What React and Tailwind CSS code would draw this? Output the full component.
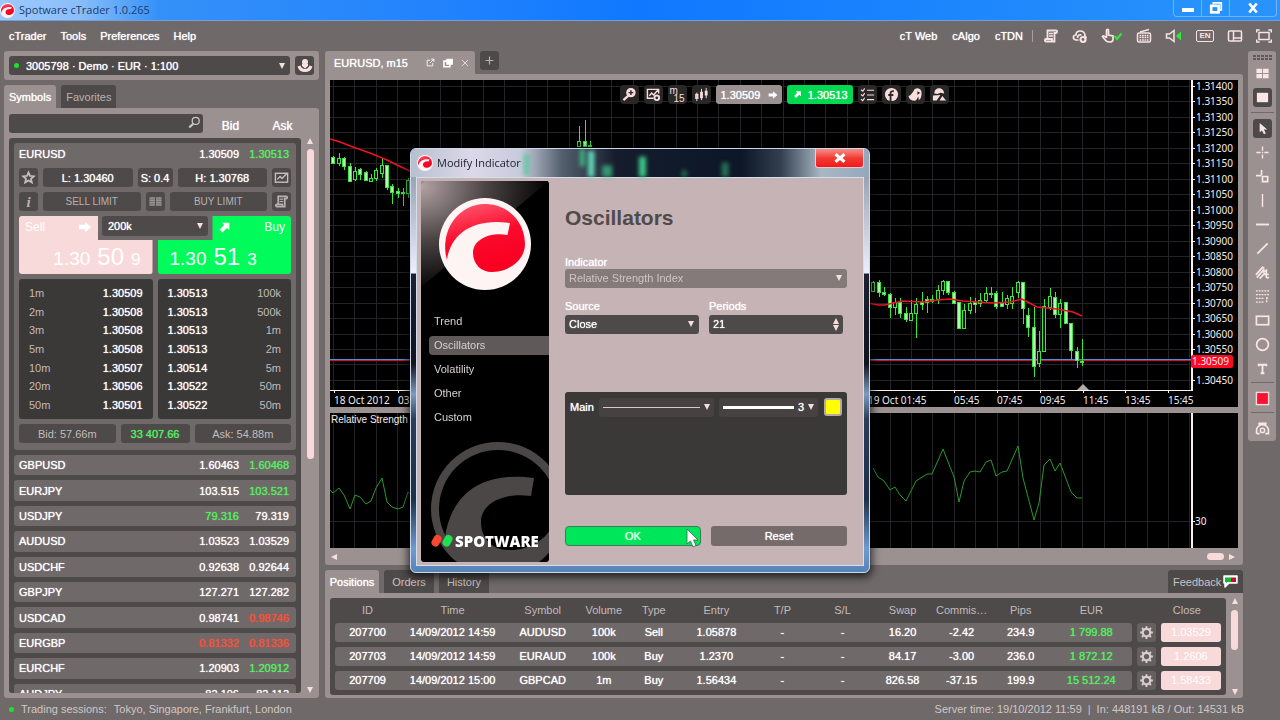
import React from "react";

const glow = "[text-shadow:0_0_1px_currentColor]";

/* ---------- small shared pieces ---------- */

function Icon({ children, size = 16, className = "" }) {
  return (
    <svg
      width={size}
      height={size}
      viewBox="0 0 16 16"
      fill="none"
      stroke="currentColor"
      strokeWidth="1.5"
      className={"shrink-0 " + className}
      aria-hidden="true"
    >
      {children}
    </svg>
  );
}

function Triangle({ dir = "down", className = "" }) {
  const points = {
    down: "0,0 8,0 4,8",
    up: "0,8 8,8 4,0",
    left: "8,0 8,8 0,4",
    right: "0,0 0,8 8,4",
  }[dir];
  return (
    <svg width="6" height="6" viewBox="0 0 8 8" className={"shrink-0 fill-[#f9dede] " + className} aria-hidden="true">
      <polygon points={points} />
    </svg>
  );
}

function Select({ label, options, className = "", wrap = "", ...rest }) {
  return (
    <div className={"relative " + wrap}>
      <select aria-label={label} className={"w-full appearance-none rounded-[3px] outline-none " + className} {...rest}>
        {options.map((o) => (
          <option key={o}>{o}</option>
        ))}
      </select>
      <Triangle className="pointer-events-none absolute top-1/2 right-[5px] -translate-y-1/2" />
    </div>
  );
}

const LOGO_PATH =
  "M-38 16 C-46 -14 -26 -40 0 -40 C23 -40 40 -22 40 0 C40 16 24 28 7 28 C-4 28 -12 20 -12 9 C-12 -4 4 -12 22.500 -9 L25 -21 C-10 -26 -34 -12 -38 16Z";

function Logo({ size }) {
  return (
    <svg width={size} height={size} viewBox="-46 -46 92 92" className="shrink-0" aria-hidden="true">
      <defs>
        <linearGradient id="logoRed" x1="0" y1="0" x2="0.3" y2="1">
          <stop offset="0" stopColor="#ff6076" />
          <stop offset="0.55" stopColor="#fb0a2c" />
          <stop offset="1" stopColor="#f90022" />
        </linearGradient>
      </defs>
      <circle r="46" fill="#fff4f4" />
      <path d={LOGO_PATH} fill="url(#logoRed)" />
    </svg>
  );
}

/* ---------- icons ---------- */

const Scroll = ({ size = 16 }) => (
  <Icon size={size}>
    <path d="M4.500 11V2.500H13c1.500 0 1.500 2.500 0 2.500h-1.500v8.500H3c-1.500 0-1.500-2.500 0-2.500h6v2.500" strokeWidth="1.800" />
    <path d="M6 5.500h4M6 8h4" strokeWidth="1.300" />
  </Icon>
);
const CloudGear = () => (
  <Icon>
    <path d="M6.500 12H4c-4-1-3-5 0-5 0-3 2-4 4-4 3 0 5 2 5 5l1.500 2M5.500 10c0-3 2-3.500 4-3" strokeWidth="1.700" />
    <circle cx="11" cy="11.500" r="2.500" strokeWidth="2.200" />
  </Icon>
);
const HandCheck = () => (
  <svg width="22" height="16" viewBox="0 0 22 16" fill="none" stroke="currentColor" strokeWidth="1.700" aria-hidden="true">
    <path d="M5.500 10V2.500c0-1.500 2-1.500 2 0V7l4.500 1v3.500c0 2-2 2.500-3.500 2.500-3 0-4-1.500-7-5.500 1-1.500 2.500 0 4 1.500" />
    <path d="M13.500 8l2.500 3 4.500-5.500" stroke="#35e83a" strokeWidth="2" />
  </svg>
);
const KeyboardIcon = () => (
  <Icon>
    <rect x="1.500" y="5" width="13" height="9" rx="1.500" />
    <path d="M4 4l9-2.500" />
    <path d="M3.500 7.500h9M3.500 9.500h9M3.500 12h9" strokeDasharray="1.800 0.700" />
  </Icon>
);
const Speaker = () => (
  <svg width="18" height="16" viewBox="0 0 18 16" fill="none" stroke="currentColor" strokeWidth="1.500" aria-hidden="true">
    <path d="M1.500 6h3L9 2.500v11L4.500 10h-3z" />
    <path d="M11 8l5-4.500v9z" fill="#35e83a" stroke="none" />
  </svg>
);
const Lang = () => (
  <span className="flex h-[12px] w-[18px] items-center justify-center rounded-[2px] border border-[#f9e2e2] text-[8px] font-bold">
    EN
  </span>
);
const Layout = () => (
  <Icon>
    <rect x="1.500" y="3" width="13" height="10" rx="1" />
    <path d="M6.500 3v10M6.500 10h8" />
  </Icon>
);
const Fullscreen = () => (
  <Icon>
    <rect x="3" y="4.500" width="10" height="7" />
    <path d="M0.700 4.500V2h3M15.300 4.500V2h-3M0.700 11.500V14h3M15.300 11.500V14h-3" />
  </Icon>
);
const Search = ({ size = 14, plus }) => (
  <Icon size={size}>
    <circle cx="9.500" cy="6" r="4.300" fill={plus ? "currentColor" : "none"} />
    <path d="M6.500 9.500L1.500 14" strokeWidth="2.500" />
    {plus && <path d="M9.500 3.500v5M7 6h5" stroke="#2a2727" />}
  </Icon>
);
const Star = () => (
  <Icon size={15}>
    <path d="M8 2.500l1.600 3.800 4.100.4-3.100 2.700 1 4L8 11.200l-3.600 2.200 1-4-3.100-2.700 4.100-.4z" strokeWidth="1.800" />
  </Icon>
);
const ChartBox = () => (
  <Icon size={15}>
    <rect x="1.500" y="3.500" width="13" height="9.500" />
    <path d="M3.500 10l3-3 2 2L14 3.500" />
  </Icon>
);
const Gear = () => (
  <Icon size={15}>
    <circle cx="8" cy="8" r="4" strokeWidth="2.400" />
    <path
      d="M8 1.200v3M8 11.800v3M1.200 8h3M11.800 8h3M3.200 3.200l2 2M10.800 10.800l2 2M3.200 12.800l2-2M10.800 5.200l2-2"
      strokeWidth="2"
    />
  </Icon>
);
const ArrowRight = ({ size = 14 }) => (
  <Icon size={size}>
    <path d="M1 5.500h7V2l7 6-7 6v-3.500H1z" fill="currentColor" stroke="none" />
  </Icon>
);
const ArrowUpRight = ({ size = 14 }) => (
  <Icon size={size}>
    <path d="M5 2h9v9l-3-2.500L5.500 14 2 10.500 7.500 5z" fill="currentColor" stroke="none" />
  </Icon>
);

/* ---------- window title and main menu ---------- */

function TitleBar() {
  return (
    <header className="flex h-[21px] shrink-0 justify-between border-b border-[#6f9fe0] bg-gradient-to-r from-[#3f98f6] via-[#0f78ff] to-[#2a94fb]">
      <div className="flex items-center gap-1 bg-gradient-to-r from-[#9cc9fa] via-[#8abefa] to-transparent pr-2 font-['Open_Sans','Noto_Sans',sans-serif] text-[11px] text-[#1c3c6e]">
        <Logo size={15} />
        <span>Spotware cTrader 1.0.265</span>
      </div>
      <div className="mr-[3px] flex h-[17px] rounded-b border-x border-b border-[#6db5ff] text-white">
        <button aria-label="Minimize" className="flex w-7 items-center justify-center border-r border-[#6db5ff]">
          <span className="mt-1 h-[4px] w-3 bg-white" />
        </button>
        <button aria-label="Restore" className="flex w-7 items-center justify-center border-r border-[#6db5ff]">
          <Icon size={14}>
            <path d="M5 4V2h9v8h-2" strokeWidth="2" />
            <rect x="2.500" y="5.500" width="8.500" height="7.500" strokeWidth="3" />
          </Icon>
        </button>
        <button aria-label="Close" className="flex w-[46px] items-center justify-center">
          <Icon size={12}>
            <path d="M3 2l10 12M13 2L3 14" strokeWidth="3.500" />
          </Icon>
        </button>
      </div>
    </header>
  );
}

function MenuBar() {
  const tools = [
    ["Journal", <Scroll />],
    ["Cloud settings", <CloudGear />],
    ["One click trading", <HandCheck />],
    ["Hotkeys", <KeyboardIcon />],
    ["Sound", <Speaker />],
    ["Language", <Lang />],
    ["Layout", <Layout />],
    ["Full screen", <Fullscreen />],
  ];
  return (
    <nav className={"flex h-[30px] shrink-0 items-center justify-between pr-2 pl-[9px] text-white " + glow}>
      <div className={"flex gap-[14px] " + glow}>
        {["cTrader", "Tools", "Preferences", "Help"].map((t) => (
          <button key={t} className={glow}>{t}</button>
        ))}
      </div>
      <div className="flex items-center">
        <div className="flex gap-[15px]">
          {["cT Web", "cAlgo", "cTDN"].map((t) => (
            <a key={t} href="#">{t}</a>
          ))}
        </div>
        <span className="mr-[10px] ml-[9px] h-3 w-px bg-[#a89e9e]" />
        <div className="flex items-center gap-[13px] text-[#f9e2e2]">
          {tools.map(([name, icon]) => (
            <button key={name} aria-label={name}>{icon}</button>
          ))}
        </div>
      </div>
    </nav>
  );
}

/* ---------- symbols column ---------- */

const chip = "flex h-[19px] items-center justify-center rounded-[3px] bg-[#4f4a4a]";
const SELL_DEPTH = [["1m", "1.30509"], ["2m", "1.30508"], ["3m", "1.30508"], ["5m", "1.30508"], ["10m", "1.30507"], ["20m", "1.30506"], ["50m", "1.30501"]];
const BUY_DEPTH = [["100k", "1.30513"], ["500k", "1.30513"], ["1m", "1.30513"], ["2m", "1.30513"], ["5m", "1.30514"], ["50m", "1.30522"], ["50m", "1.30522"]];

const UP = "text-[#55f060]";
const DOWN = "text-[#ff5138]";
const FLAT = "text-white";
const SYMBOLS = [
  ["GBPUSD", "1.60463", FLAT, "1.60468", UP],
  ["EURJPY", "103.515", FLAT, "103.521", UP],
  ["USDJPY", "79.316", UP, "79.319", FLAT],
  ["AUDUSD", "1.03523", FLAT, "1.03529", FLAT],
  ["USDCHF", "0.92638", FLAT, "0.92644", FLAT],
  ["GBPJPY", "127.271", FLAT, "127.282", FLAT],
  ["USDCAD", "0.98741", FLAT, "0.98746", DOWN],
  ["EURGBP", "0.81332", DOWN, "0.81336", DOWN],
  ["EURCHF", "1.20903", FLAT, "1.20912", UP],
  ["AUDJPY", "82.106", FLAT, "82.112", FLAT],
];

function Depth({ rows, reverse }) {
  return (
    <div className="grid h-[140px] auto-rows-fr rounded-[3px] bg-[#3b3838] px-[10px] py-[5px]">
      {rows.map(([vol, price], i) => (
        <div key={i} className={"flex items-center justify-between " + (reverse ? "flex-row-reverse" : "")}>
          <span className="text-[#c2baba]">{vol}</span>
          <span className={"text-white " + glow}>{price}</span>
        </div>
      ))}
    </div>
  );
}

function SymbolCard() {
  return (
    <article className="shrink-0 rounded-[3px] bg-[#706969] px-[5px] pb-[7px] text-white">
      <div className={"flex h-[25px] items-center pr-[2px] pb-[3px] " + glow}>
        <h2 className="flex-1">EURUSD</h2>
        <span className="w-[50px] text-right">1.30509</span>
        <span className={"w-[50px] text-right " + UP}>1.30513</span>
      </div>
      <div className="flex flex-col gap-[5px]">
        <div className="flex gap-[5px]">
          <button aria-label="Favorite" className={chip + " w-[19px] text-[#c9bebe]"}><Star /></button>
          <span className={chip + " flex-1 " + glow}>L: 1.30460</span>
          <span className={chip + " w-[35px] " + glow}>S: 0.4</span>
          <span className={chip + " flex-1 " + glow}>H: 1.30768</span>
          <button aria-label="Open chart" className={chip + " w-[19px] text-[#c9bebe]"}><ChartBox /></button>
        </div>
        <div className="flex gap-[5px] text-[10px] text-[#b9b0b0]">
          <button aria-label="Symbol info" className={chip + " w-[19px] font-['Liberation_Serif',serif] text-[15px] font-bold italic"}>i</button>
          <button className={chip + " flex-1"}>SELL LIMIT</button>
          <button aria-label="Depth of market" className={chip + " w-[19px]"}>
            <Icon size={15}>
              <path d="M1.500 3.500h6v9h-6zM8.500 3.500h6v9h-6z" fill="currentColor" stroke="none" opacity="0.7" />
              <path d="M1 5.500h14M1 8h14M1 10.500h14" stroke="#4f4a4a" strokeWidth="0.500" />
            </Icon>
          </button>
          <button className={chip + " flex-1"}>BUY LIMIT</button>
          <button aria-label="Order history" className={chip + " w-[19px]"}><Scroll size={15} /></button>
        </div>
        <div className="relative grid h-[58px] grid-cols-2 gap-[5px]">
          <button className="flex flex-col justify-between rounded-[3px] bg-[#f9dada] [clip-path:polygon(0_0,79px_0,79px_24px,100%_24px,100%_100%,0_100%)]">
            <span className="flex w-[79px] items-center justify-between px-[6px] pt-1 text-[12px]">
              Sell <ArrowRight />
            </span>
            <span className="flex w-full items-baseline justify-end gap-[7px] pr-3 text-[19px] leading-7">
              1.30 <b className="text-[24px] font-normal">50</b> <small className="text-[17px]">9</small>
            </span>
          </button>
          <button className="flex flex-col justify-between rounded-[3px] bg-[#00fb5b] [clip-path:polygon(55px_0,100%_0,100%_100%,0_100%,0_24px,55px_24px)]">
            <span className="flex w-[79px] items-center justify-between self-end px-[6px] pt-1 text-[12px]">
              <ArrowUpRight size={13} /> Buy
            </span>
            <span className="flex w-full items-baseline gap-[7px] pl-3 text-[19px] leading-7">
              1.30 <b className="text-[24px] font-normal">51</b> <small className="text-[17px]">3</small>
            </span>
          </button>
          <Select
            label="Volume"
            options={["200k", "100k", "500k"]}
            wrap="!absolute inset-x-[83px] top-0"
            className={"h-5 bg-[#4f4a4a] px-[6px] " + glow}
          />
        </div>
        <div className="grid grid-cols-2 gap-[5px]">
          <Depth rows={SELL_DEPTH} />
          <Depth rows={BUY_DEPTH} reverse />
        </div>
        <div className="flex gap-[5px] text-[#c2baba]">
          <span className={chip + " flex-1"}>Bid: 57.66m</span>
          <span className={chip + " w-[69px] " + UP + " " + glow}>33 407.66</span>
          <span className={chip + " flex-1"}>Ask: 54.88m</span>
        </div>
      </div>
    </article>
  );
}

function SymbolsColumn() {
  return (
    <aside className="flex w-[315px] shrink-0 flex-col">
      <div className="mb-[5px] flex gap-[5px] rounded-[3px] bg-[#9b9191] p-[5px]">
        <div className="relative flex-1">
          <Select
            label="Account"
            options={["3005798 · Demo · EUR · 1:100"]}
            className={"h-[19px] bg-[#4f4a4a] pr-4 pl-[17px] text-white " + glow}
          />
          <span className="pointer-events-none absolute top-[7px] left-[5px] h-[5px] w-[5px] rounded-full bg-[#1fe030]" />
        </div>
        <button aria-label="Deposit" className={chip + " w-[19px] text-[#f9e2e2]"}>
          <Icon>
            <circle cx="8" cy="4" r="3" fill="currentColor" stroke="none" />
            <path d="M5 6h6v2l-3 2.500L5 8z" fill="currentColor" stroke="none" />
            <path d="M2 8c1 3.500 3.500 4.500 6 4.500s5-1 6-4.500" strokeWidth="3" />
          </Icon>
        </button>
      </div>
      <div role="tablist" className="flex h-[23px] gap-[5px]">
        <button role="tab" aria-selected="true" className={"rounded-t-[3px] bg-[#9b9191] px-[5px] text-white " + glow}>Symbols</button>
        <button role="tab" aria-selected="false" className="rounded-t-[3px] bg-[#4f4a4a] px-[5px] text-[#b9b0b0]">Favorites</button>
      </div>
      <div className="flex min-h-0 flex-1 flex-col rounded-[3px] rounded-tl-none bg-[#9b9191] pt-[6px] pb-[5px] pl-[5px]">
        <div className="mb-[5px] flex items-center text-[12px] text-white">
          <div className="relative w-[194px] text-[#d2c8c8]">
            <input aria-label="Search symbols" className="block h-[19px] w-full rounded-[3px] bg-[#4f4a4a] px-2 text-[11px] text-white outline-none" />
            <span className="pointer-events-none absolute top-[2px] right-[2px]"><Search size={13} /></span>
          </div>
          <span className={"w-[55px] pt-1 text-center " + glow}>Bid</span>
          <span className={"w-[49px] pt-1 text-center " + glow}>Ask</span>
        </div>
        <div className="flex min-h-0 flex-1">
          <div className="flex min-w-0 flex-1 flex-col gap-[5px] overflow-hidden rounded-[3px] bg-[#4f4a4a] px-[5px] pt-[5px]">
            <SymbolCard />
            <ul className="grid h-[249px] shrink-0 auto-rows-fr gap-[5px]">
              {SYMBOLS.map(([name, bid, bc, ask, ac]) => (
                <li key={name} className={"flex items-center rounded-[3px] bg-[#706969] pr-[7px] pl-[5px] text-white " + glow}>
                  <span className="flex-1">{name}</span>
                  <span className={"w-[50px] text-right " + bc}>{bid}</span>
                  <span className={"w-[50px] text-right " + ac}>{ask}</span>
                </li>
              ))}
            </ul>
          </div>
          <div className="flex w-[18px] flex-col items-center">
            <Triangle dir="up" />
            <span className="mt-[5px] h-[310px] w-[7px] rounded-full bg-[#f9dada]" />
            <Triangle className="mt-auto" />
          </div>
        </div>
      </div>
    </aside>
  );
}

/* ---------- chart ---------- */

/* x, body top, body bottom, wick top, wick bottom, 1 = filled body */
const CANDLES = [
  [333, 157, 163, 156, 164, 1], [339, 158, 163, 153, 166, 0], [344, 158, 166, 157, 170, 1], [350, 166, 181, 163, 182, 1],
  [355, 171, 179, 167, 181, 0], [360, 169, 174, 168, 180, 1], [366, 172, 180, 171, 181, 1], [371, 178, 181, 174, 182, 0],
  [376, 170, 178, 168, 181, 0], [382, 165, 173, 158, 178, 0], [387, 165, 187, 165, 190, 1], [392, 186, 192, 184, 204, 1],
  [398, 191, 193, 188, 198, 1], [403, 192, 193, 188, 206, 1], [408, 180, 193, 178, 198, 0],
  [579, 141, 146, 126, 147, 0], [585, 141, 146, 120, 147, 1], [590, 145, 146, 141, 147, 0],
  [873, 282, 291, 281, 292, 0], [879, 282, 292, 280, 297, 1], [884, 292, 294, 287, 296, 1], [890, 294, 307, 293, 318, 1],
  [895, 302, 307, 298, 315, 0], [900, 302, 313, 298, 318, 1], [906, 313, 319, 307, 322, 1], [911, 313, 320, 300, 321, 0],
  [916, 304, 313, 298, 338, 0], [922, 302, 304, 292, 310, 1], [927, 299, 302, 296, 313, 1], [932, 299, 301, 295, 303, 1],
  [938, 290, 299, 285, 304, 0], [943, 281, 290, 280, 295, 0], [948, 281, 292, 281, 295, 1], [954, 292, 303, 291, 303, 1],
  [959, 302, 328, 302, 328, 1], [964, 310, 328, 304, 328, 0], [970, 303, 310, 297, 314, 0], [975, 302, 304, 298, 313, 1],
  [980, 300, 303, 293, 307, 0], [986, 293, 300, 287, 303, 0], [991, 293, 294, 287, 298, 1], [996, 293, 306, 291, 309, 1],
  [1002, 303, 306, 292, 307, 1], [1007, 298, 304, 295, 309, 0], [1012, 296, 303, 287, 309, 0], [1018, 282, 292, 281, 298, 0],
  [1023, 282, 308, 282, 324, 1], [1028, 315, 327, 308, 337, 1], [1034, 327, 366, 307, 377, 1], [1039, 351, 363, 331, 367, 0],
  [1044, 306, 351, 299, 352, 0], [1050, 296, 307, 288, 310, 0], [1055, 297, 314, 292, 318, 1], [1060, 303, 314, 299, 328, 0],
  [1066, 302, 323, 302, 324, 1], [1071, 323, 350, 323, 359, 1], [1077, 351, 360, 347, 368, 1], [1082, 361, 362, 339, 366, 1],
];

const PRICES = Array.from({ length: 20 }, (_, i) => (1.314 - i * 0.0005).toFixed(5));
const COLS = Array.from({ length: 41 }, (_, i) => Math.round(333 + i * 21.41));
const rowY = (i) => Math.round(86 + i * 15.47);
const TIMES = [["18 Oct 2012", 334], ["03:45", 398], ["19 Oct 01:45", 868], ["05:45", 954], ["07:45", 997], ["09:45", 1040], ["11:45", 1083], ["13:45", 1125], ["15:45", 1168]];
const axisFont = "fill-[#f4ecec] font-['Noto_Sans',sans-serif] text-[10px]";

function PriceChart() {
  return (
    <svg className="block h-full w-full" viewBox="330 80 908 327" preserveAspectRatio="xMinYMin slice" role="img" aria-label="EURUSD m15 price chart">
      <g stroke="#242428" shapeRendering="crispEdges">
        {COLS.map((x) => <line key={x} x1={x} x2={x} y1="80" y2="390" />)}
        {PRICES.map((p, i) => <line key={p} x1="330" x2="1191" y1={rowY(i)} y2={rowY(i)} />)}
      </g>
      <rect x="330" y="359" width="862" height="1" fill="#4a90e0" />
      <rect x="330" y="360" width="862" height="1" fill="#e00a30" />
      <g shapeRendering="crispEdges">
        {CANDLES.map(([x, top, bot, hi, lo, full]) => (
          <g key={x}>
            <rect x={x - 0.5} y={hi} width="1" height={lo - hi} fill="#35e83a" />
            <rect x={x - 1.5} y={top} width="3" height={Math.max(bot - top, 1)} fill={full ? "#b4f7ae" : "#031503"} stroke="#35e83a" />
          </g>
        ))}
      </g>
      <g fill="none" stroke="#ee1420" strokeWidth="1.600">
        <polyline points="330,139 340,142 353,147 370,153 387,160 397,165 412,172" />
        <path d="M868 303 L878 305 L885 305 L893 303 L903 301 L923 302 L938 300 L950 299 L963 301 L993 303 L1010 302 L1022 299 L1037 307 L1057 309 L1073 312 L1082 316" />
      </g>
      <path d="M1077 390l6-6 6 6z" fill="#b5aaaa" />
      <g fill="#fbf0f0">
        <rect x="330" y="390" width="862" height="1" />
        <rect x="1191" y="80" width="2" height="311" />
        {TIMES.map(([t, x]) => <rect key={t} x={x} y="390" width="1" height="3" />)}
        {PRICES.map((p, i) => <rect key={p} x="1192" y={rowY(i)} width="3" height="1" />)}
      </g>
      <g className={axisFont}>
        {PRICES.map((p, i) => i !== 18 && <text key={p} x="1196" y={rowY(i) + 4}>{p}</text>)}
        {TIMES.map(([t, x]) => <text key={t} x={x} y="404">{t}</text>)}
      </g>
      <rect x="1191" y="355" width="42" height="13" rx="2" fill="#fb0a22" />
      <text x="1192" y="365" className={axisFont}>1.30509</text>
    </svg>
  );
}

function OscillatorChart() {
  return (
    <svg className="block h-full w-full" viewBox="330 413 908 135" preserveAspectRatio="xMinYMin slice" role="img" aria-label="Relative Strength Index">
      <g stroke="#242428" shapeRendering="crispEdges">
        {COLS.map((x) => <line key={x} x1={x} x2={x} y1="413" y2="548" />)}
        <line x1="330" x2="1191" y1="521" y2="521" />
      </g>
      <g fill="none" stroke="#279a2b">
        <polyline points="330,490 333,493 339,488 344,495 350,509 355,495 360,497 366,504 371,501 376,488 382,478 387,502 392,507 398,509 403,507 408,492 413,496" />
        <polyline points="873,468 878,477 884,481 890,490 895,487 900,495 906,501 916,481 927,474 932,474 943,449 954,477 959,502 964,481 970,472 975,471 980,472 986,462 991,460 996,476 1002,472 1007,471 1018,446 1023,478 1034,520 1039,503 1044,465 1050,459 1055,471 1060,463 1071,492 1077,498 1082,498" />
      </g>
      <rect x="1191" y="413" width="2" height="135" fill="#fbf0f0" />
      <rect x="1192" y="521" width="3" height="1" fill="#fbf0f0" />
      <text x="331" y="423" className="fill-[#f4ecec] font-['Liberation_Sans',sans-serif] text-[10px]">Relative Strength</text>
      <text x="1195" y="525" className={axisFont}>30</text>
    </svg>
  );
}

const overlayBtn = "flex h-[19px] w-[19px] items-center justify-center rounded-[4px] bg-[#2d2a2a]/90 text-[#f9dede]";

function ChartToolbar() {
  return (
    <div className="absolute inset-x-0 top-[5px] flex justify-center gap-[5px] text-white">
      <button aria-label="Zoom" className={overlayBtn}><Search plus size={15} /></button>
      <button aria-label="Chart settings" className={overlayBtn}>
        <Icon size={15}>
          <path d="M8 12H1.500V2.500h12V7M3.500 9.500l2.500-3 2 2 4.500-5" />
          <circle cx="11.500" cy="11.500" r="2.500" strokeWidth="2" />
        </Icon>
      </button>
      <button aria-label="Timeframe" className={overlayBtn + " flex-col text-[10px] leading-[8px]"}>
        <span className="self-start pl-[2px]">m</span>
        <span className="self-end pr-[2px]">15</span>
      </button>
      <button aria-label="Chart type" className={overlayBtn}>
        <Icon size={15}>
          <path d="M3 6v9M8 2v12M13 1v11" strokeWidth="1" />
          <rect x="2" y="8" width="2" height="4" />
          <path d="M6.500 5h3v7h-3zM11.500 4h3v5h-3z" fill="currentColor" stroke="none" />
        </Icon>
      </button>
      <button className={"flex h-[19px] w-[66px] items-center justify-between rounded-[3px] bg-[#9b9191] pr-1 pl-[5px] " + glow}>
        1.30509 <ArrowRight size={10} />
      </button>
      <button className={"flex h-[19px] w-[66px] items-center justify-between rounded-[3px] bg-[#00d84f] pr-[5px] pl-[6px] " + glow}>
        <ArrowUpRight size={9} /> 1.30513
      </button>
      <button aria-label="Objects" className={overlayBtn}>
        <Icon size={15}>
          <path d="M1 3l2 1.500L5 1.500M1 8l2 1.500L5 6.500M1 13l2 1.500L5 11.500M7.500 3.500H15M7.500 8.500H15M7.500 13.500H15" strokeWidth="1.200" />
        </Icon>
      </button>
      <button aria-label="Share on Facebook" className={overlayBtn}>
        <Icon size={15}>
          <circle cx="8" cy="8" r="7" fill="currentColor" stroke="none" />
          <path d="M7 15V6.500Q7 4 10.500 4.500M4.500 8.500h5.500" stroke="#2d2a2a" strokeWidth="2" />
        </Icon>
      </button>
      <button aria-label="Share on Twitter" className={overlayBtn}>
        <Icon size={15}>
          <path d="M0.500 9.500C3 9 3.500 7 5.500 5 6.500 1.500 10 0.500 12.500 2c2.500 1.500 2.500 6 1 10l-2 2-.5-4-2.500 4.500C4 15 1 13 .5 9.500z" fill="currentColor" stroke="none" />
          <path d="M10 4.500l3 1.500-3 2.500z" fill="#2d2a2a" stroke="none" />
        </Icon>
      </button>
      <button aria-label="Send by mail" className={overlayBtn}>
        <Icon size={15}>
          <path d="M2.500 7C2.500-.5 12.500-.5 13 7L9 6 6 7.500zM1 14.500V9l8-.5-4 6zM8 14.500l3-5 4 5z" fill="currentColor" stroke="none" />
        </Icon>
      </button>
    </div>
  );
}

function ChartPanel() {
  return (
    <section className="flex min-h-0 flex-1 flex-col">
      <div className="flex h-[23px] shrink-0 gap-[5px]">
        <div className={"flex w-[150px] items-center gap-2 rounded-t-[3px] bg-[#9b9191] pr-[6px] pl-[9px] text-white " + glow}>
          <button className={"mr-auto " + glow}>EURUSD, m15</button>
          <button aria-label="Detach chart">
            <Icon size={9}><path d="M7 4H2v10h10V9M9 2h5v5M14 2L7 9" strokeWidth="1.500" /></Icon>
          </button>
          <button aria-label="Duplicate chart">
            <Icon size={10}>
              <rect x="6" y="2" width="9" height="8" fill="currentColor" />
              <path d="M6 5H1.500v9H11v-4" strokeWidth="2.500" />
            </Icon>
          </button>
          <button aria-label="Close chart" className="text-[#e2d8d8]">
            <Icon size={8}><path d="M2 2l12 12M14 2L2 14" strokeWidth="2" /></Icon>
          </button>
        </div>
        <button aria-label="New chart" className="flex h-[19px] w-[19px] items-center justify-center rounded-[3px] bg-[#4f4a4a] text-[#b9b0b0]">
          <Icon size={9}><path d="M8 1v14M1 8h14" strokeWidth="2" /></Icon>
        </button>
      </div>
      <div className="flex min-h-0 flex-1 flex-col rounded-[3px] rounded-tl-none bg-[#9b9191] px-[5px] pt-[6px]">
        <div className="relative min-h-0 flex-1 overflow-hidden bg-black">
          <PriceChart />
          <ChartToolbar />
        </div>
        <div className="mt-[6px] h-[135px] shrink-0 overflow-hidden bg-black"><OscillatorChart /></div>
        <div className="flex h-[17px] shrink-0 items-center pr-[3px] pl-px">
          <Triangle dir="left" />
          <span className="ml-auto h-[7px] w-[17px] rounded-full bg-[#f9dada]" />
          <Triangle dir="right" className="ml-[5px]" />
        </div>
      </div>
    </section>
  );
}

/* ---------- positions ---------- */

const HEAD = ["ID", "Time", "Symbol", "Volume", "Type", "Entry", "T/P", "S/L", "Swap", "Commis…", "Pips", "EUR"];
const WIDTHS = [65, 105, 75, 47, 53, 72, 60, 60, 60, 58, 60, 81, 29, 60];
const POSITIONS = [
  ["207700", "14/09/2012 14:59", "AUDUSD", "100k", "Sell", "1.05878", "-", "-", "16.20", "-2.42", "234.9", "1 799.88", "1.03529"],
  ["207703", "14/09/2012 14:59", "EURAUD", "100k", "Buy", "1.2370", "-", "-", "84.17", "-3.00", "236.0", "1 872.12", "1.2606"],
  ["207709", "14/09/2012 15:00", "GBPCAD", "1m", "Buy", "1.56434", "-", "-", "826.58", "-37.15", "199.9", "15 512.24", "1.58433"],
];

function PositionsPanel() {
  return (
    <section className="mt-[5px] shrink-0">
      <div role="tablist" className="flex h-[23px] gap-[5px] text-[#c9c1c1]">
        <button role="tab" aria-selected="true" className={"w-[54px] rounded-t-[3px] bg-[#9b9191] text-white " + glow}>Positions</button>
        <button role="tab" aria-selected="false" className="w-[50px] rounded-t-[3px] bg-[#4f4a4a]">Orders</button>
        <button role="tab" aria-selected="false" className="w-[50px] rounded-t-[3px] bg-[#4f4a4a]">History</button>
        <button className="ml-auto flex w-[75px] items-center gap-[2px] rounded-t-[3px] bg-[#4f4a4a] pl-[5px]">
          Feedback
          <svg width="15" height="13" viewBox="0 0 15 13" aria-hidden="true">
            <path d="M1 1h13v7H6l-4 4V8H1z" fill="#fff" stroke="#fff" strokeWidth="1.500" strokeLinejoin="round" />
            <path d="M2 2.500h6V7H4L3 8.500V7H2z" fill="#18b534" />
            <path d="M8 2.500h5V7H8z" fill="#c8102a" />
          </svg>
        </button>
      </div>
      <div className="flex rounded-[3px] rounded-t-none bg-[#9b9191] pt-[5px] pb-[3px] pl-[5px]">
        <div className="min-w-0 flex-1 rounded-[3px] bg-[#4f4a4a] px-[5px]">
          <table className="w-full table-fixed border-separate border-spacing-x-0 border-spacing-y-[5px] text-center">
            <colgroup>
              {WIDTHS.map((w, i) => <col key={i} style={{ width: (w / 885) * 100 + "%" }} />)}
            </colgroup>
            <thead className="text-[#c2baba]">
              <tr className="h-[15px] leading-[15px]">
                {HEAD.map((h) => <th key={h} scope="col" className="p-0 font-normal whitespace-nowrap">{h}</th>)}
                <td className="p-0" />
                <th scope="col" className="p-0 pr-2 font-normal">Close</th>
              </tr>
            </thead>
            <tbody className={"text-white " + glow}>
              {POSITIONS.map((row) => (
                <tr key={row[0]} className="h-[19px] leading-[19px]">
                  {row.slice(0, 12).map((v, i) => (
                    <td
                      key={i}
                      className={
                        "bg-[#706969] p-0 whitespace-nowrap " +
                        (i === 0 ? "rounded-l-[3px] " : "") +
                        (i === 11 ? "rounded-r-[3px] " + UP : "")
                      }
                    >
                      {v}
                    </td>
                  ))}
                  <td className="px-[5px] py-0">
                    <button aria-label={"Modify " + row[0]} className="flex h-[19px] w-[19px] items-center justify-center rounded-[3px] bg-[#665f5f] text-[#d9cdcd]">
                      <Gear />
                    </button>
                  </td>
                  <td className="p-0">
                    <button className="block h-[19px] w-full rounded-[3px] bg-[#f9dada]">{row[12]}</button>
                  </td>
                </tr>
              ))}
            </tbody>
          </table>
        </div>
        <div className="flex w-[17px] flex-col items-center">
          <Triangle dir="up" />
          <span className="mt-[6px] h-10 w-[7px] rounded-full bg-[#f9dada]" />
          <Triangle className="mt-auto" />
        </div>
      </div>
    </section>
  );
}

/* ---------- drawing tools ---------- */

const DRAW_TOOLS = [
  ["Multi chart", <path d="M1.500 3h6v4.500h-6zM8.500 3h6v4.500h-6zM1.500 8.500h6V13h-6zM8.500 8.500h6V13h-6z" fill="currentColor" stroke="none" />],
  ["Single chart", <rect x="2" y="3" width="12" height="10" fill="currentColor" stroke="none" />, "on"],
  "sep1",
  ["Pointer", <path d="M5 2v10l2.500-2 2 4 2-1-2-4H13z" fill="currentColor" stroke="none" />, "on"],
  ["Crosshair", <path d="M8 1.500v4.500M8 10v4.500M1.500 8H6M10 8h4.500M7.300 8h1.400" />],
  ["Marker cursor", <path d="M7 1v5M1 7h6M8 8h5.500v5.500H8z" strokeWidth="1.800" />],
  ["Vertical line", <path d="M8 1v14" />],
  ["Horizontal line", <path d="M1 8h14" strokeWidth="2" />],
  ["Trend line", <path d="M2.500 13.500l11-11" strokeWidth="1.800" />],
  ["Equidistant channel", <path d="M1 10.500L8 2.500l2 1M2 13.500L10 4M5 14.500l5.500-6M8.500 8l4.500-3M12 5v7c0 2 1 2 3 1M9 10h5.500" strokeWidth="1.800" />],
  ["Fibonacci", <path d="M1 2h14M1 6h14M1 10h8M1 14h8M12.500 9v6M12 9.500h3" strokeDasharray="2 1" />],
  ["Rectangle", <rect x="1.500" y="3.500" width="13" height="9" strokeWidth="1.800" />],
  ["Ellipse", <circle cx="8" cy="8" r="6.300" strokeWidth="1.800" />],
  ["Text", <path d="M4 5.500V4h8v1.500M8 4v9M6 13h4" strokeWidth="2" />],
  "sep2",
  ["Color", <rect x="1.500" y="1.500" width="13" height="13" fill="#fb1232" stroke="#f9dada" />],
  "sep3",
  ["Snapshot", <g><path d="M1.700 13.500V8.500C3 5.500 4.500 4 8 4s5 1.500 6.300 4.500v5H11M1.700 13.500H5M4.500 4V2.500h7V4" strokeWidth="1.800" /><circle cx="8" cy="10" r="2.300" /></g>],
];

function DrawToolbar() {
  return (
    <aside aria-label="Drawing tools" className="flex w-7 shrink-0 flex-col items-center self-start rounded-[3px] bg-[#9b9191] pb-px text-[#fbe6e6]">
      <svg width="20" height="10" viewBox="0 0 20 10" aria-hidden="true">
        <path d="M1 5h19M1 8h19" stroke="#5f5858" strokeWidth="2" strokeDasharray="3 1" />
      </svg>
      {DRAW_TOOLS.map((t) =>
        typeof t === "string" ? (
          <span key={t} className={"mb-[3px] h-px w-[23px] bg-[#706969] " + (t === "sep1" ? "mt-[3px]" : "mt-[2px]")} />
        ) : (
          <button key={t[0]} aria-label={t[0]} className="flex h-6 items-center">
            <span className={"flex h-[19px] w-[19px] items-center justify-center rounded-[3px] " + (t[2] ? "bg-[#4f4a4a]" : "")}>
              <Icon size={15}>{t[1]}</Icon>
            </span>
          </button>
        )
      )}
    </aside>
  );
}

/* ---------- dialog ---------- */

const field = "h-[19px] px-1 text-[11px]";

function IndicatorDialog() {
  return (
    <div className="fixed inset-0 flex items-center justify-center">
      <div
        role="dialog"
        aria-label="Modify Indicator"
        className="flex h-[425px] w-[460px] flex-col overflow-hidden rounded-[6px] border border-[#c9d8ea] bg-[linear-gradient(180deg,#9aa5b5_0,#9aa5b5_30px,#f0effc_124px,#1b2233_125px,#10141f_215px,#7e9cbe_245px,#2b3d58_270px,#1c3048_350px,#6f9cd0_400px,#5480b4_425px)] px-[5px] pb-[6px] shadow-[0_2px_8px_2px_rgba(0,0,0,0.7)]"
      >
        <div className="relative -mx-[5px] flex h-[28px] shrink-0 items-center bg-[linear-gradient(90deg,#b7c0cf_0,#dcd8ea_60px,#c7cbdc_110px,#55616f_150px,#151d2d_205px,#0c1626_330px,#33404f_370px,#a9b7c4_410px,#93a7bd_460px)]">
          <svg className="absolute inset-0 h-full w-full blur-[2px]" viewBox="0 0 460 29" preserveAspectRatio="none" aria-hidden="true">
            <g fill="#3fc98a">
              <rect x="113" y="5" width="6" height="22" opacity="0.6" />
              <rect x="170" y="0" width="4" height="18" />
              <rect x="178" y="2" width="6" height="27" fill="#63e0bd" />
              <rect x="192" y="17" width="10" height="12" opacity="0.7" />
              <rect x="229" y="8" width="7" height="21" />
              <rect x="312" y="14" width="7" height="15" opacity="0.5" />
              <rect x="272" y="22" width="5" height="7" opacity="0.5" />
            </g>
          </svg>
          <h1 className="relative flex items-center gap-1 pl-[6px] font-['Open_Sans','Noto_Sans',sans-serif] text-[11px] font-normal text-[#222330]">
            <Logo size={16} />
            Modify Indicator
          </h1>
          <button aria-label="Close dialog" className="absolute top-0 right-[5px] flex h-[19px] w-[49px] items-center justify-center rounded-b-[3px] border border-t-0 border-[#f5c9c9] bg-gradient-to-b from-[#f58c84] via-[#f03a35] to-[#f2161b] text-white">
            <Icon size={12}><path d="M2 3l12 10M14 3L2 13" strokeWidth="4" /></Icon>
          </button>
        </div>
        <div className="flex min-h-0 flex-1 border border-[#d4dfea] bg-[#c6b3b5] pt-[3px] pb-[3px] pl-1">
          <div className="relative flex w-32 shrink-0 flex-col overflow-hidden rounded-[3px] bg-black text-[#d8d0d0]">
            <svg className="absolute inset-0 h-full w-full" viewBox="0 0 128 381" preserveAspectRatio="xMinYMin slice" aria-hidden="true">
              <defs>
                <radialGradient id="sheen" cx="0" cy="0.050" r="1">
                  <stop offset="0" stopColor="#b3a2a4" />
                  <stop offset="0.500" stopColor="#4c4546" />
                  <stop offset="1" stopColor="#000" />
                </radialGradient>
              </defs>
              <path d="M0 0h128L0 106z" fill="url(#sheen)" />
              <g transform="translate(77 328)">
                <circle r="67" fill="#4b4747" />
                <circle r="59" fill="#000" />
                <path d="M-53 28 C-46 -17 -15 -38 36 -31 L33 -13 C6 -17 -17 -6 -17 13 C-17 29 -6 41 10 41 C30 41 45 34 57 14 C50 45 25 61 0 61 C-25 61 -47 48 -53 28Z" fill="#4b4747" />
              </g>
            </svg>
            <div className="relative flex justify-center pt-[17px]"><Logo size={92} /></div>
            <nav className="relative mt-[20px] flex flex-col pl-2">
              {["Trend", "Oscillators", "Volatility", "Other", "Custom"].map((t, i) => (
                <button key={t} className="flex h-6 items-center text-left">
                  <span className={"h-[19px] flex-1 rounded-l-[4px] pl-[5px] leading-[19px] " + (i === 1 ? "bg-[#5f5959]" : "")}>{t}</span>
                </button>
              ))}
            </nav>
            <div className="relative mt-auto mb-[10px] flex items-center gap-[2px] pl-[10px] font-['Open_Sans',sans-serif] text-[15px] leading-[22px] font-extrabold text-white">
              <svg width="22" height="13" viewBox="0 0 22 13" aria-hidden="true">
                <path d="M4.500 8.500l2-3.500" stroke="#fb4632" strokeWidth="8" strokeLinecap="round" />
                <path d="M15.500 8.500l2-3.500" stroke="#1fdf52" strokeWidth="8" strokeLinecap="round" />
              </svg>
              SPOTWARE
            </div>
          </div>
          <form className="flex min-w-0 flex-1 flex-col pr-4 pl-4 text-white" onSubmit={(e) => e.preventDefault()}>
            <h2 className="mt-[23px] text-[21px] leading-[28px] font-bold text-[#504a4a]">Oscillators</h2>
            <label htmlFor="indicator" className={"mt-[23px] leading-[14px] " + glow}>Indicator</label>
            <div className="relative">
              <select id="indicator" className={field + " block w-full appearance-none rounded-[3px] bg-[#857a7a] text-[#cfc5c5]"}>
                <option>Relative Strength Index</option>
              </select>
              <Triangle className="pointer-events-none absolute top-[6px] right-[5px]" />
            </div>
            <div className="mt-[11px] flex gap-[10px]">
              <div className="w-[134px]">
                <label htmlFor="source" className={"block leading-[14px] " + glow}>Source</label>
                <div className="relative mt-[2px]">
                  <select id="source" className={field + " block w-full appearance-none rounded-[3px] bg-[#4f4a4a] " + glow}>
                    <option>Close</option>
                  </select>
                  <Triangle className="pointer-events-none absolute top-[6px] right-[5px]" />
                </div>
              </div>
              <div className="w-[134px]">
                <label htmlFor="periods" className={"block leading-[14px] " + glow}>Periods</label>
                <div className="relative mt-[2px]">
                  <input id="periods" type="text" inputMode="numeric" defaultValue="21" className={field + " block w-full rounded-[3px] bg-[#4f4a4a] " + glow} />
                  <span className="pointer-events-none absolute top-[3px] right-1 flex flex-col gap-px">
                    <Triangle dir="up" />
                    <Triangle />
                  </span>
                </div>
              </div>
            </div>
            <fieldset className="mt-[58px] h-[103px] rounded-[3px] bg-[#3b3838] px-[5px] pt-[6px]">
              <div className="flex items-center gap-[5px]">
                <span className={"w-6 " + glow}>Main</span>
                <button type="button" aria-label="Line style" className="flex h-[19px] w-[115px] items-center gap-1 rounded-[3px] bg-[#474242] px-1">
                  <span className="h-px flex-1 bg-[#d9c9c9]" />
                  <Triangle />
                </button>
                <button type="button" aria-label="Line width" className={"flex h-[19px] w-[99px] items-center gap-1 rounded-[3px] bg-[#474242] px-1 " + glow}>
                  <span className="h-[3px] flex-1 bg-white" />3<Triangle />
                </button>
                <button type="button" aria-label="Line color" className="ml-auto h-[18px] w-[18px] rounded-[3px] border-2 border-[#b5a9a9] bg-[#ffff00]" />
              </div>
            </fieldset>
            <div className="mt-[31px] grid grid-cols-2 gap-[10px]">
              <button className={"h-5 rounded-[4px] border border-[#3f7a55] bg-[#00e65a] text-[#e6ffe9] " + glow}>OK</button>
              <button type="reset" className={"h-5 rounded-[3px] bg-[#756b6b] " + glow}>Reset</button>
            </div>
          </form>
        </div>
      </div>
      <svg className="absolute top-[calc(50%+168px)] left-[calc(50%+46px)]" width="14" height="20" viewBox="0 0 14 20" aria-hidden="true">
        <path d="M1 1v15l3.500-3 2.500 6 3-1.500-2.500-5.500H12z" fill="#fff" stroke="#4a5a50" strokeWidth="0.800" />
      </svg>
    </div>
  );
}

/* ---------- page ---------- */

export default function App() {
  return (
    <div className="flex h-screen min-h-[640px] flex-col overflow-hidden bg-[#706969] font-['Liberation_Sans',Arial,sans-serif] text-[11px] leading-[14px]">
      <TitleBar />
      <MenuBar />
      <main className="flex min-h-0 flex-1 pr-1 pl-1">
        <SymbolsColumn />
        <div className="mr-[5px] ml-[6px] flex min-w-0 flex-1 flex-col">
          <ChartPanel />
          <PositionsPanel />
        </div>
        <DrawToolbar />
      </main>
      <footer className="flex h-[22px] shrink-0 items-center justify-between pr-9 pl-[9px] text-[#cfc7c7]">
        <p className="flex items-center gap-[7px]">
          <span className="h-[5px] w-[5px] rounded-full bg-[#1fe030]" />
          <span>Trading sessions:</span>
          <span>Tokyo, Singapore, Frankfurt, London</span>
        </p>
        <p className="flex gap-[6px]">
          <span>Server time: 19/10/2012 11:59</span>
          <span>|</span>
          <span>In: 448191 kB / Out: 14531 kB</span>
        </p>
      </footer>
      <IndicatorDialog />
    </div>
  );
}
